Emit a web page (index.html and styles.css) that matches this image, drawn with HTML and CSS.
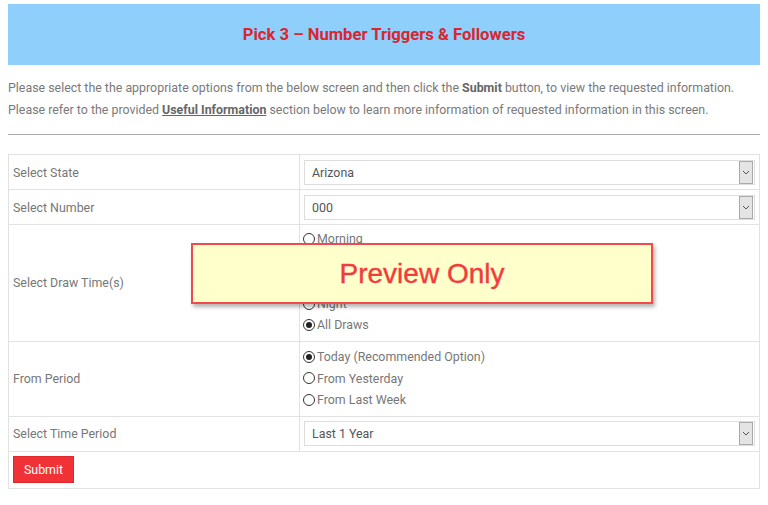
FILE: index.html
```html
<!DOCTYPE html>
<html>
<head>
<meta charset="utf-8">
<link rel="stylesheet" href="styles.css">
</head>
<body>
<div class="page">
  <div class="banner"><h1>Pick 3 – Number Triggers &amp; Followers</h1></div>
  <p class="intro">Please select the the appropriate options from the below screen and then click the <b>Submit</b> button, to view the requested information.<br>Please refer to the provided <b><u>Useful Information</u></b> section below to learn more information of requested information in this screen.</p>
  <hr class="rule">
  <table class="form">
    <tr>
      <td class="label">Select State</td>
      <td class="field"><div class="select"><span class="val">Arizona</span><span class="arrow"><svg width="8" height="5" viewBox="0 0 8 5"><path d="M1 1l3 3 3-3" fill="none" stroke="#555" stroke-width="1"/></svg></span></div></td>
    </tr>
    <tr>
      <td class="label">Select Number</td>
      <td class="field"><div class="select"><span class="val">000</span><span class="arrow"><svg width="8" height="5" viewBox="0 0 8 5"><path d="M1 1l3 3 3-3" fill="none" stroke="#555" stroke-width="1"/></svg></span></div></td>
    </tr>
    <tr>
      <td class="label">Select Draw Time(s)</td>
      <td class="radios">
        <div class="opt"><span class="radio"></span>Morning</div>
        <div class="opt"><span class="radio"></span>Midday</div>
        <div class="opt"><span class="radio"></span>Evening</div>
        <div class="opt"><span class="radio"></span>Night</div>
        <div class="opt"><span class="radio on"></span>All Draws</div>
      </td>
    </tr>
    <tr>
      <td class="label">From Period</td>
      <td class="radios from">
        <div class="opt"><span class="radio on"></span>Today (Recommended Option)</div>
        <div class="opt"><span class="radio"></span>From Yesterday</div>
        <div class="opt"><span class="radio"></span>From Last Week</div>
      </td>
    </tr>
    <tr>
      <td class="label">Select Time Period</td>
      <td class="field"><div class="select"><span class="val">Last 1 Year</span><span class="arrow"><svg width="8" height="5" viewBox="0 0 8 5"><path d="M1 1l3 3 3-3" fill="none" stroke="#555" stroke-width="1"/></svg></span></div></td>
    </tr>
    <tr>
      <td class="submit-cell" colspan="2"><button class="submit">Submit</button></td>
    </tr>
  </table>
  <div class="preview">Preview Only</div>
</div>
</body>
</html>
```
FILE: styles.css
```css
* { box-sizing: border-box; }
html, body { margin: 0; padding: 0; background: #fff; }
body { font-family: Roboto, "Liberation Sans", sans-serif; color: #777; font-size: 12.4px; }
.page { position: relative; padding: 4px 8px 0 8px; }
.banner { background: #8ecffc; height: 61px; display: flex; align-items: center; justify-content: center; }
.banner h1 { margin: 0; font-size: 16.6px; font-weight: 700; color: #d9262f; }
.intro { margin: 12px 0 0 0; line-height: 22px; font-size: 12.4px; color: #7a7a7a; white-space: nowrap; }
.intro b { color: #666; }
.rule { margin: 13px 0 0 0; border: 0; border-top: 1px solid #aaa; height: 0; }
.form { margin-top: 19px; width: 100%; border-collapse: collapse; border: 1px solid #e2e2e2; }
.form td { border: 1px solid #e2e2e2; vertical-align: middle; }
.label { width: 291px; padding: 0 4px; height: 35px; }
.field { padding: 4px 4px 4px 4px; }
.select { display: flex; align-items: center; height: 25px; border: 1px solid #ddd; padding-left: 7px; color: #555; }
.val { flex: 1; }
.arrow { width: 14px; height: 23px; margin-right: 1px; background: #e4e4e4; border: 1px solid #aaa; display: flex; align-items: center; justify-content: center; }
.radios { padding: 3px 4px 5px 3px; }
.radios.from { padding: 4px 4px 5px 3px; }
.opt { display: flex; align-items: center; height: 21.6px; line-height: 21.6px; }
.radio { width: 12px; height: 12px; border: 1px solid #333; border-radius: 50%; margin-right: 2px; position: relative; background: #fff; }
.radio.on::after { content: ""; position: absolute; left: 2px; top: 2px; width: 6px; height: 6px; border-radius: 50%; background: #222; }
.submit-cell { padding: 4px 4px 4px 4px; height: 37px; }
.submit { display: block; background: #f03236; color: #fff; border: 1px solid #e0282c; font-family: Roboto, "Liberation Sans", sans-serif; font-size: 12.4px; width: 61px; height: 27px; padding: 0; }
.preview { position: absolute; left: 191px; top: 243px; width: 462px; height: 61px; background: #ffffcc; border: 2px solid #f24a4a; box-shadow: 2px 3px 4px rgba(0,0,0,0.3); color: #f23c3c; font-size: 28px; -webkit-text-stroke: 0.4px #f23c3c; display: flex; align-items: center; justify-content: center; font-family: "Liberation Sans", Arial, sans-serif; }
```
